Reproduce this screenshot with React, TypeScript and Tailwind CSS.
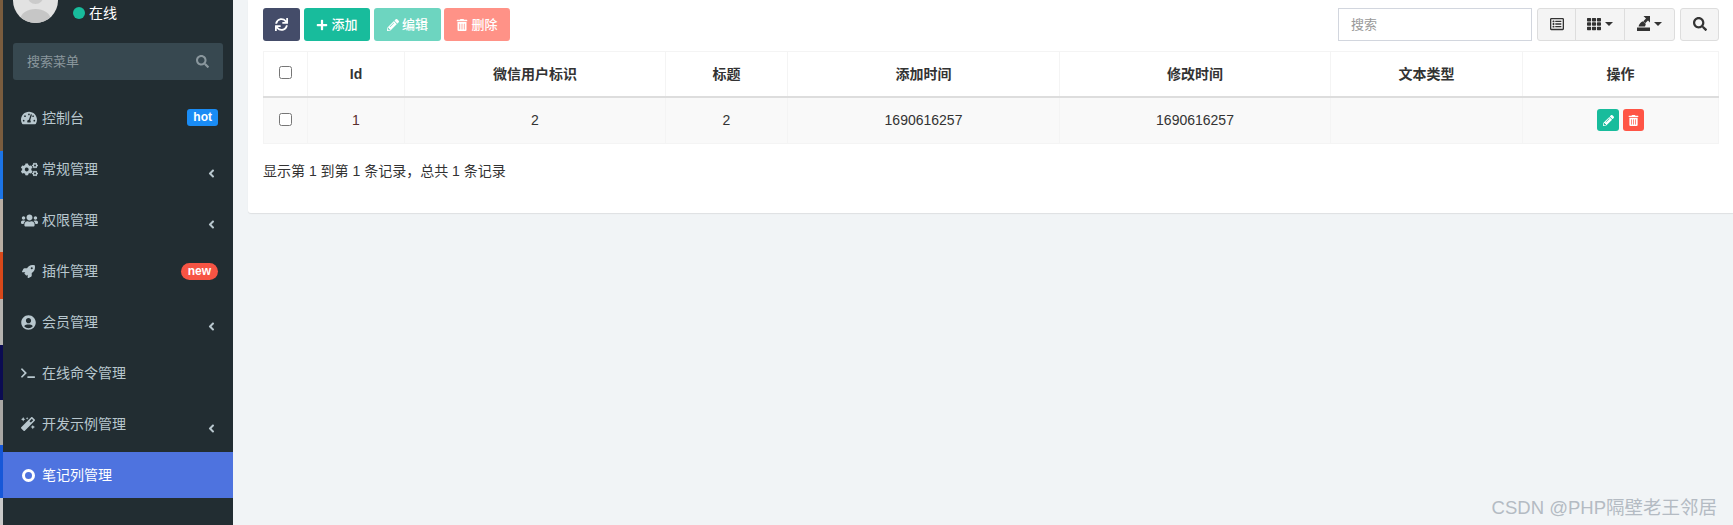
import type { ReactNode } from "react";
import {
  FaAngleLeft,
  FaCogs,
  FaMagic,
  FaPencilAlt,
  FaPlus,
  FaRegListAlt,
  FaRocket,
  FaSearch,
  FaSync,
  FaTachometerAlt,
  FaTerminal,
  FaTh,
  FaTrashAlt,
  FaUserCircle,
  FaUsers,
} from "react-icons/fa";

type MenuItem = {
  label: string;
  icon: ReactNode;
  badge?: "hot" | "new";
  arrow?: boolean;
  active?: boolean;
};

const menu: MenuItem[] = [
  { label: "控制台", icon: <FaTachometerAlt size={16} />, badge: "hot" },
  { label: "常规管理", icon: <FaCogs size={17} />, arrow: true },
  { label: "权限管理", icon: <FaUsers size={17} />, arrow: true },
  { label: "插件管理", icon: <FaRocket size={13} className="ml-[1px]" />, badge: "new" },
  { label: "会员管理", icon: <FaUserCircle size={15} />, arrow: true },
  { label: "在线命令管理", icon: <FaTerminal size={14} /> },
  { label: "开发示例管理", icon: <FaMagic size={14} />, arrow: true },
  {
    label: "笔记列管理",
    icon: <span className="ml-[1px] block h-[13px] w-[13px] rounded-full border-[3px] border-white" />,
    active: true,
  },
];

const columns = ["Id", "微信用户标识", "标题", "添加时间", "修改时间", "文本类型", "操作"];

function Wallpaper() {
  return (
    <div className="flex w-[3px] shrink-0 flex-col">
      <div className="h-[151px] bg-[#7a5c3e]" />
      <div className="h-[48px] bg-[#1c74e6]" />
      <div className="h-[53px] bg-[#b9aea3]" />
      <div className="h-[47px] bg-[#d8481a]" />
      <div className="h-[46px] bg-[#b5b3b0]" />
      <div className="h-[55px] bg-[#0b0b52]" />
      <div className="h-[45px] bg-[#a9a7a4]" />
      <div className="h-[53px] bg-[#1657d8]" />
      <div className="flex-1 bg-[#c9c9c9]" />
    </div>
  );
}

function Sidebar() {
  return (
    <aside className="w-[230px] shrink-0 overflow-hidden bg-[#222d32] text-[14px] text-[#b8c7ce]">
      <div className="-mt-[22px] flex h-[65px] pl-[10px]">
        <svg className="h-[45px] w-[45px] rounded-full" viewBox="0 0 45 45">
          <rect width="45" height="45" fill="#e2e2e2" />
          <circle cx="22.5" cy="18" r="8" fill="#cbcbcb" />
          <ellipse cx="22.5" cy="41" rx="15" ry="10" fill="#c6c6c6" />
        </svg>
        <div className="mt-[26px] ml-[15px] flex h-[18px] items-center gap-[4px] text-white">
          <span className="h-3 w-3 rounded-full bg-[#18bc9c]" />
          在线
        </div>
      </div>

      <div className="mx-[10px] flex h-[37px] items-center justify-between rounded-[3px] bg-[#374850] pr-[14px] pl-[14px] text-[13px] text-[#8a979d]">
        <span>搜索菜单</span>
        <FaSearch size={13} />
      </div>

      <nav className="mt-[15px] flex flex-col gap-[5px]">
        {menu.map((item) => (
          <div
            key={item.label}
            className={`flex h-[46px] items-center pr-[15px] pl-[18px] ${item.active ? "bg-[#4e73df] text-white" : ""}`}
          >
            <span className="flex w-[21px] shrink-0 items-center">{item.icon}</span>
            <span className="flex-1">{item.label}</span>
            {item.badge === "hot" ? (
              <span className="-mt-[1px] rounded-[3px] bg-[#1a8cf5] px-[6px] text-[12px] leading-[17px] font-bold text-white">
                hot
              </span>
            ) : null}
            {item.badge === "new" ? (
              <span className="rounded-full bg-[#f75444] px-[7px] text-[12px] leading-[17px] font-bold text-white">
                new
              </span>
            ) : null}
            {item.arrow ? <FaAngleLeft size={13} className="mt-[8px]" /> : null}
          </div>
        ))}
      </nav>
    </aside>
  );
}

function ExportIcon() {
  return (
    <svg width="13" height="15" viewBox="0 0 13 15" fill="currentColor">
      <path d="M0 11.500h13V15H0z" />
      <path d="M1.500 10.500C2 8 3.800 6 6 5.200L8.800 8 8 10.500z" />
      <path d="M6.500 0H13v6.500l-2-2-2.800 2.700-1.900-1.900L9 2.500z" />
    </svg>
  );
}

function Caret() {
  return <span className="ml-[4px] h-0 w-0 border-x-[4px] border-t-[4px] border-x-transparent border-t-[#333]" />;
}

function Toolbar() {
  return (
    <div className="flex h-[33px] items-stretch text-[13px] font-medium text-white">
      <button className="flex w-[37px] items-center justify-center rounded-[3px] bg-[#444c69]">
        <FaSync size={13} />
      </button>
      <button className="ml-[4px] flex w-[66px] items-center justify-center gap-[3px] rounded-[3px] bg-[#18bc9c]">
        <FaPlus size={12} />
        添加
      </button>
      <button className="ml-[4px] flex w-[67px] items-center justify-center gap-[3px] rounded-[3px] bg-[#6dd5c0]">
        <FaPencilAlt size={12} />
        编辑
      </button>
      <button className="ml-[3px] flex w-[66px] items-center justify-center gap-[3px] rounded-[3px] bg-[#ff9287]">
        <FaTrashAlt size={12} />
        删除
      </button>

      <input
        placeholder="搜索"
        className="ml-auto h-[33px] w-[194px] border border-[#d2d6de] px-[12px] text-[13px] font-normal text-[#333] outline-none placeholder:text-[#999]"
      />
      <div className="ml-[5px] flex rounded-[3px] border border-[#ddd] bg-[#f4f4f4] pb-[2px] text-[#333]">
        <button className="flex w-[37px] items-center justify-center">
          <FaRegListAlt size={14} />
        </button>
        <span className="-mb-[2px] w-px bg-[#ddd]" />
        <button className="flex w-[48px] items-center justify-center">
          <FaTh size={14} />
          <Caret />
        </button>
        <span className="-mb-[2px] w-px bg-[#ddd]" />
        <button className="flex w-[49px] items-center justify-center">
          <ExportIcon />
          <Caret />
        </button>
      </div>
      <button className="ml-[5px] flex w-[39px] items-center justify-center rounded-[3px] border border-[#ddd] bg-[#f4f4f4] pb-[2px] text-[#333]">
        <FaSearch size={14} />
      </button>
    </div>
  );
}

function DataTable() {
  return (
    <table className="mt-[10px] w-full table-fixed border-collapse text-[14px] text-[#333]">
      <colgroup>
        <col className="w-[44px]" />
        <col className="w-[97px]" />
        <col className="w-[261px]" />
        <col className="w-[122px]" />
        <col className="w-[272px]" />
        <col className="w-[271px]" />
        <col className="w-[192px]" />
        <col />
      </colgroup>
      <thead>
        <tr className="h-[45px] border-b-2 border-[#ddd]">
          <th className="border border-b-0 border-[#f4f4f4] font-bold">
            <input type="checkbox" className="mx-auto -mt-[2px] block" />
          </th>
          {columns.map((col) => (
            <th key={col} className="border border-b-0 border-[#f4f4f4] pt-[2px] font-bold">
              {col}
            </th>
          ))}
        </tr>
      </thead>
      <tbody>
        <tr className="h-[47px] bg-[#f9f9f9] text-center">
          <td className="border border-[#f4f4f4]">
            <input type="checkbox" className="mx-auto -mt-[2px] block" />
          </td>
          <td className="border border-[#f4f4f4] text-[#5a2f2c]">1</td>
          <td className="border border-[#f4f4f4]">2</td>
          <td className="border border-[#f4f4f4]">2</td>
          <td className="border border-[#f4f4f4]">1690616257</td>
          <td className="border border-[#f4f4f4]">1690616257</td>
          <td className="border border-[#f4f4f4]" />
          <td className="border border-[#f4f4f4]">
            <div className="flex justify-center gap-[4px] text-white">
              <span className="flex h-[22px] w-[22px] items-center justify-center rounded-[3px] bg-[#18bc9c]">
                <FaPencilAlt size={11} />
              </span>
              <span className="flex h-[22px] w-[21px] items-center justify-center rounded-[3px] bg-[#ff5546]">
                <FaTrashAlt size={11} />
              </span>
            </div>
          </td>
        </tr>
      </tbody>
    </table>
  );
}

export default function App() {
  return (
    <div
      className="relative flex h-[525px] w-full overflow-hidden bg-[#f1f4f6]"
      style={{ fontFamily: '"Liberation Sans", "Noto Sans CJK SC", sans-serif' }}
    >
      <Wallpaper />
      <Sidebar />
      <main className="flex-1 pl-[15px]">
        <div className="h-[213px] rounded-bl-[3px] bg-white pt-[8px] pr-[14px] pl-[15px] shadow-[0_1px_1px_rgba(0,0,0,0.08)]">
          <Toolbar />
          <DataTable />
          <p className="mt-[18px] text-[14px] leading-[18px] text-[#333]">
            显示第 1 到第 1 条记录，总共 1 条记录
          </p>
        </div>
      </main>
      <span className="absolute right-[16px] bottom-[6px] text-[18.5px] leading-[22px] text-[#b4bbc3]">
        CSDN @PHP隔壁老王邻居
      </span>
    </div>
  );
}
